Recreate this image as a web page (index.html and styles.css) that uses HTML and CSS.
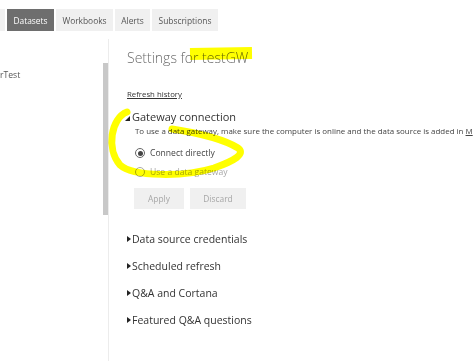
FILE: index.html
```html
<!DOCTYPE html>
<html>
<head>
<meta charset="utf-8">
<link rel="stylesheet" href="styles.css">
</head>
<body>
<div class="tabbar">
  <div class="tab stub"></div>
  <div class="tab active">Datasets</div>
  <div class="tab">Workbooks</div>
  <div class="tab">Alerts</div>
  <div class="tab">Subscriptions</div>
</div>
<div class="main">
  <div class="sidebar">
    <div class="side-item">rTest</div>
    <div class="thumb"></div>
  </div>
  <div class="content">
    <h1 class="title">Settings for testGW</h1>
    <a class="history">Refresh history</a>
    <div class="section open">
      <div class="sec-head"><span class="tri-open"></span>Gateway connection</div>
      <div class="sec-body">
        <p class="desc">To use a data gateway, make sure the computer is online and the data source is added in <u>M</u></p>
        <div class="radio checked"><span class="ring"></span>Connect directly</div>
        <div class="radio disabled"><span class="ring"></span>Use a data gateway</div>
        <div class="buttons">
          <button class="btn apply">Apply</button>
          <button class="btn discard">Discard</button>
        </div>
      </div>
    </div>
    <div class="section"><span class="tri"></span>Data source credentials</div>
    <div class="section"><span class="tri"></span>Scheduled refresh</div>
    <div class="section"><span class="tri"></span>Q&amp;A and Cortana</div>
    <div class="section"><span class="tri"></span>Featured Q&amp;A questions</div>
  </div>
</div>
<svg class="marker" width="474" height="361" viewBox="0 0 474 361">
  <path d="M190 54 L252 53" stroke="#ffff00" stroke-width="12" fill="none"/>
  <path d="M127 112 C111 118 106 149 120 165 C133 177 185 177 214 168 C234 161 246 154 238 148 C225 140 198 133 172 129" stroke="#ffff00" stroke-width="7" fill="none" stroke-linecap="round"/>
</svg>
</body>
</html>
```
FILE: styles.css
```css
* { box-sizing: border-box; }
html, body { margin: 0; padding: 0; }
body {
  width: 474px;
  height: 361px;
  overflow: hidden;
  background: #fff;
  font-family: "Open Sans", "Noto Sans", sans-serif;
  color: #333;
  position: relative;
}
.tabbar {
  display: flex;
  gap: 2px;
  margin-top: 9px;
  height: 22px;
}
.tab {
  background: #f0f0f0;
  color: #555;
  font-size: 8.4px;
  display: flex;
  align-items: center;
  padding: 0 6px;
}
.tab.stub { width: 5px; padding: 0; }
.tab.active { background: #6e6e6e; color: #fff; width: 47px; justify-content: center; }
.tab:nth-child(3) { width: 57px; justify-content: center; }
.tab:nth-child(4) { width: 35px; justify-content: center; }
.tab:nth-child(5) { width: 66px; justify-content: center; }
.main {
  display: flex;
  margin-top: 8px;
  height: 330px;
}
.sidebar {
  width: 109px;
  border-right: 1px solid #ececec;
  position: relative;
  flex: none;
}
.side-item {
  font-size: 8.6px;
  color: #555;
  margin-top: 30px;
}
.thumb {
  position: absolute;
  left: 103px;
  top: 24px;
  width: 5px;
  height: 152px;
  background: #c8c8c8;
}
.content {
  padding-left: 18px;
  flex: 1;
  min-width: 0;
}
.title {
  margin: 9px 0 0;
  font-size: 14px;
  font-weight: 300;
  color: #6a6a6a;
  line-height: 20px;
  white-space: nowrap;
}
.history {
  display: block;
  margin-top: 20px;
  font-size: 7.8px;
  color: #333;
  text-decoration: underline;
  line-height: 12px;
}
.section {
  font-size: 10.5px;
  color: #333;
  line-height: 14px;
  margin-top: 13px;
  display: flex;
  align-items: center;
  white-space: nowrap;
}
.section.open { display: block; margin-top: 9px; }
.sec-head {
  font-size: 11px;
  line-height: 16px;
  display: flex;
  align-items: center;
  margin-left: -2px;
}
.tri-open {
  width: 0; height: 0;
  border-left: 5px solid transparent;
  border-bottom: 5px solid #222;
  margin-right: 2px;
  margin-top: 3px;
}
.tri {
  width: 0; height: 0;
  border-top: 3px solid transparent;
  border-bottom: 3px solid transparent;
  border-left: 4px solid #222;
  margin-right: 1px;
}
.sec-body { padding-left: 8px; }
.desc {
  margin: 1px 0 0;
  font-size: 7.95px;
  color: #444;
  line-height: 11px;
  white-space: nowrap;
}
.radio {
  display: flex;
  align-items: center;
  font-size: 8.6px;
  color: #444;
  height: 12px;
  margin-top: 10px;
}
.radio.disabled { color: #a8a8a8; margin-top: 7px; }
.ring {
  width: 10px; height: 10px;
  border-radius: 50%;
  border: 1px solid #666;
  margin-right: 5px;
  display: flex;
  align-items: center;
  justify-content: center;
}
.radio.checked .ring::after {
  content: "";
  width: 5px; height: 5px;
  border-radius: 50%;
  background: #444;
}
.radio.disabled .ring { border-color: #aaa; }
.buttons {
  display: flex;
  gap: 6px;
  margin-top: 10px;
  margin-left: -1px;
}
.btn {
  border: none;
  background: #f0f0f0;
  color: #a6a6a6;
  font-family: inherit;
  font-size: 8.4px;
  height: 21px;
  padding: 0;
}
.apply { width: 50px; }
.discard { width: 56px; }
.section.open + .section { margin-top: 23px; }
.marker {
  position: absolute;
  left: 0; top: 0;
  pointer-events: none;
  mix-blend-mode: multiply;
}
```
